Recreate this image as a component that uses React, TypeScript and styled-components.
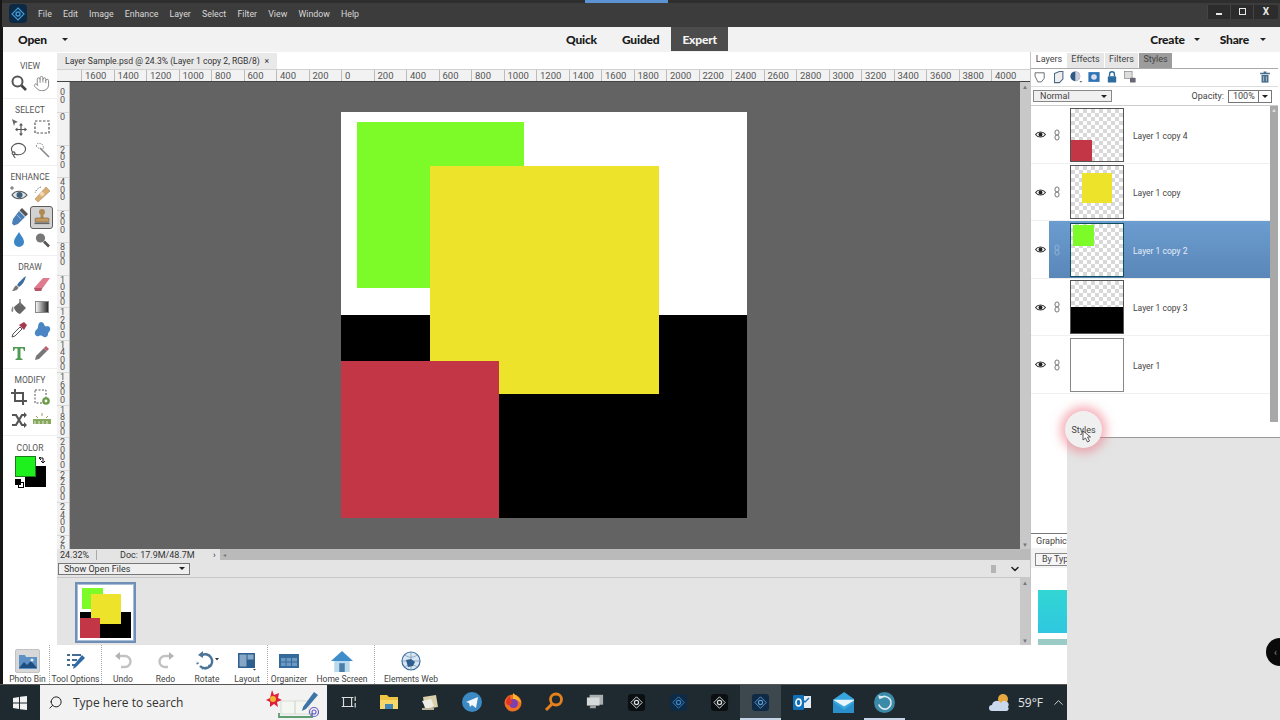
import React from 'react'
import styled, { createGlobalStyle } from 'styled-components'
import { ChevronDown, ChevronUp, Search, Hand, Lasso } from 'lucide-react'

const GlobalStyle = createGlobalStyle`
  html, body { margin: 0; padding: 0; background: #e4e4e4; }
  * { box-sizing: border-box; }
  body { font-family: Roboto, "Liberation Sans", sans-serif; }
`

const Page = styled.div`
  position: relative;
  display: grid;
  width: 1280px;
  height: 720px;
  overflow: hidden;
  background: #e4e4e4;
  grid-template-columns: 1030px 37px 213px;
  grid-template-rows: 27px 25px 386px 207px 39px 36px;
`

/* ---- title + mode bars ---- */
const TitleBar = styled.div`
  grid-column: 1 / -1;
  position: relative;
  display: flex;
  align-items: center;
  padding: 0 2px 0 9px;
  background: linear-gradient(#2e2e2e 0, #2e2e2e 3px, #3c3c3c 3px);
  border-left: 2px solid #161616;
`
const ProgressStrip = styled.div`
  position: absolute;
  left: 583px;
  top: 0;
  width: 83px;
  height: 3px;
  background: #5b93d3;
`
const Logo = styled.div`
  display: flex;
  width: 18px;
  height: 19px;
  margin-left: -2px;
  align-items: center;
  justify-content: center;
  border-radius: 4px;
  background: #0c2a45;
`
const Menu = styled.div`
  display: flex;
  gap: 11.2px;
  margin-left: 11px;
  color: #d8d8d8;
  font-size: 8.8px;
`
const WindowControls = styled.div`
  display: flex;
  margin-left: auto;
  margin-top: -4px;
  height: 14px;
  border-radius: 2px;
  background: #2c2c2c;
  color: #e8e8e8;
`
const WindowButton = styled.div<{ $w: number }>`
  display: flex;
  width: ${(p) => p.$w}px;
  align-items: center;
  justify-content: center;
  font-size: 10px;
  font-weight: 700;
  border-left: 1px solid #454545;
`
const MinGlyph = styled.span`
  width: 6px;
  height: 2px;
  margin-top: 5px;
  background: #e8e8e8;
`
const MaxGlyph = styled.span`
  width: 7px;
  height: 7px;
  border: 1.5px solid #e8e8e8;
`
const ModeBar = styled.div`
  grid-column: 1 / -1;
  position: relative;
  display: flex;
  align-items: center;
  padding-left: 15px;
  background: #f2f2f2;
  border-left: 3px solid #161616;
  font-family: Lato, "Open Sans", sans-serif;
  font-size: 12px;
  font-weight: 900;
  letter-spacing: -0.2px;
  color: #1a1a1a;
`
const Caret = styled.span<{ $ml: number }>`
  width: 0;
  height: 0;
  margin-left: ${(p) => p.$ml}px;
  border-left: 3px solid transparent;
  border-right: 3px solid transparent;
  border-top: 3px solid #222;
`
const ModeLink = styled.div<{ $ml: number; $active?: boolean }>`
  display: flex;
  height: 24px;
  margin-left: ${(p) => p.$ml}px;
  padding: 0 ${(p) => (p.$active ? 11 : 0)}px;
  align-items: center;
  color: ${(p) => (p.$active ? '#f4f4f4' : '#1a1a1a')};
  background: ${(p) => (p.$active ? '#4c4c4c' : 'transparent')};
`
const ModeCenter = styled.div`
  position: absolute;
  left: 563px;
  top: 0;
  display: flex;
  align-items: center;
`
const ModeRight = styled.div`
  margin-left: auto;
  margin-right: 14px;
  display: flex;
  align-items: center;
`

/* ---- workspace ---- */
const Workspace = styled.div`
  grid-column: 1;
  grid-row: 3 / 5;
  display: flex;
  min-height: 0;
  border-left: 3px solid #161616;
`
const ToolColumn = styled.div`
  width: 54px;
  flex: none;
  padding-top: 2px;
  background: #fff;
`
const ToolSection = styled.div<{ $last?: boolean }>`
  padding: ${(p) => (p.$last ? 7 : 6)}px 0 ${(p) => (p.$last ? 0 : 3.5)}px;
  border-bottom: ${(p) => (p.$last ? 'none' : '1px solid #f0f0f0')};
  margin-bottom: -1px;
`
const ToolLabel = styled.div`
  height: 13px;
  line-height: 12px;
  text-align: center;
  font-size: 8.5px;
  color: #555;
`
const ToolGrid = styled.div`
  display: grid;
  margin-top: -1.5px;
  grid-template-columns: 23px 23px;
  grid-auto-rows: 23px;
  justify-content: center;
`
const ToolButton = styled.div<{ $active?: boolean }>`
  display: flex;
  align-items: center;
  justify-content: center;
  border-radius: 3px;
  background: ${(p) => (p.$active ? '#d2d2d2' : 'transparent')};
  border: ${(p) => (p.$active ? '1px solid #5c5c5c' : 'none')};
`
const ColorWell = styled.div`
  position: relative;
  width: 32px;
  height: 32px;
  margin: 1px 0 0 12px;
`
const Swatch = styled.div<{ $x: number; $y: number; $w: number; $c: string; $b?: string }>`
  position: absolute;
  left: ${(p) => p.$x}px;
  top: ${(p) => p.$y}px;
  width: ${(p) => p.$w}px;
  height: ${(p) => p.$w}px;
  background: ${(p) => p.$c};
  border: ${(p) => (p.$b ? `1px solid ${p.$b}` : 'none')};
`
const SwapArrows = styled.svg`
  position: absolute;
  left: 23px;
  top: 1px;
`
const EditorArea = styled.div`
  flex: 1;
  min-width: 0;
  display: flex;
  flex-direction: column;
  background: #e4e4e4;
`
const TabStrip = styled.div`
  height: 18px;
  padding-top: 1px;
  background: #fff;
  border-bottom: 1px solid #d0d0d0;
`
const DocTab = styled.div`
  display: flex;
  width: 220px;
  height: 16px;
  padding: 0 8px 0 8px;
  align-items: center;
  justify-content: space-between;
  background: #e9e9e9;
  font-size: 8.6px;
  color: #333;
  white-space: nowrap;
`
const HRuler = styled.div`
  display: flex;
  height: 12px;
  flex: none;
  overflow: hidden;
  padding-left: 24px;
  background: #f2f2f2;
  border-bottom: 1px solid #444;
`
const HRulerCell = styled.div`
  width: 32.5px;
  flex: none;
  padding-left: 3px;
  border-left: 1px solid #bbb;
  font-size: 9.5px;
  line-height: 11px;
  color: #555;
`
const CanvasRow = styled.div`
  display: flex;
  height: 467px;
  flex: none;
`
const VRuler = styled.div`
  width: 13px;
  flex: none;
  overflow: hidden;
  background: #f2f2f2;
  border-right: 1px solid #bbb;
`
const VRulerCell = styled.div`
  height: 32.5px;
  padding: 1px 0 0 3px;
  border-top: 1px solid #d8d8d8;
  white-space: pre-line;
  font-size: 9px;
  line-height: 7.5px;
  color: #555;
  &:first-child {
    margin-top: -2.5px;
  }
`
const Canvas = styled.div`
  flex: 1;
  display: flex;
  align-items: center;
  justify-content: center;
  padding: 0 2px 2px 0;
  background: #636363;
`
const Document = styled.div`
  position: relative;
  width: 406px;
  height: 406px;
  background: linear-gradient(#fff 0, #fff 50%, #000 50%);
`
const Shape = styled.div<{ $x: number; $y: number; $w: number; $h: number; $c: string }>`
  position: absolute;
  left: ${(p) => p.$x}px;
  top: ${(p) => p.$y}px;
  width: ${(p) => p.$w}px;
  height: ${(p) => p.$h}px;
  background: ${(p) => p.$c};
`
const VScroll = styled.div`
  display: flex;
  width: 10px;
  flex: none;
  flex-direction: column;
  justify-content: space-between;
  align-items: center;
  background: #c8c8c8;
  color: #777;
  font-size: 6px;
  line-height: 9px;
`
const StatusBar = styled.div`
  display: flex;
  height: 11px;
  flex: none;
  align-items: center;
  font-size: 9px;
  color: #333;
`
const ZoomField = styled.div`
  width: 40px;
  padding-left: 3px;
  border-right: 1px solid #aaa;
`
const DocInfo = styled.div`
  width: 116px;
  padding-left: 23px;
`
const HScrollTrack = styled.div`
  flex: 1;
  height: 100%;
  margin-left: 4px;
  padding-left: 3px;
  line-height: 11px;
  background: #bababa;
  color: #777;
  font-size: 6px;
`
const BinHeader = styled.div`
  display: flex;
  height: 18px;
  flex: none;
  align-items: center;
  padding: 0 9px 0 1px;
  border-bottom: 1px solid #c8c8c8;
`
const BinSelect = styled.div`
  display: flex;
  width: 132px;
  height: 12px;
  align-items: center;
  justify-content: space-between;
  padding: 0 4px 0 5px;
  background: #efefef;
  border: 1px solid #777;
  font-size: 9px;
  color: #333;
`
const BinGrip = styled.div`
  width: 5px;
  height: 8px;
  margin-left: auto;
  margin-right: 13px;
  background: #b5b5b5;
`
const BinBody = styled.div`
  flex: 1;
  min-height: 0;
  display: flex;
  padding-left: 18px;
`
const BinThumb = styled.div`
  position: relative;
  width: 61px;
  height: 61px;
  margin-top: 4px;
  border: 2px solid #6f8fb6;
  outline: 1px solid #a9bdd6;
  outline-offset: -3px;
  background: #fff;
`
const MiniDoc = styled.div`
  position: absolute;
  left: 3px;
  top: 3px;
  width: 51px;
  height: 51px;
  background: linear-gradient(#fff 0, #fff 50%, #000 50%);
`
const BinSpacer = styled.div`
  flex: 1;
`

/* ---- layers panel ---- */
const LayersPanel = styled.div`
  grid-column: 2 / 4;
  grid-row: 3;
  position: relative;
  display: flex;
  flex-direction: column;
  padding-right: 2px;
  background: #fff;
  border-left: 1px solid #c4c4c4;
  &::after {
    content: '';
    position: absolute;
    left: 36px;
    right: 0;
    bottom: 0;
    height: 1px;
    background: #999;
  }
`
const PanelTabs = styled.div`
  display: flex;
  height: 17px;
  flex: none;
  padding: 1px 0 0 1px;
  gap: 1px;
  border-bottom: 1px solid #aaa;
`
const PanelTab = styled.div<{ $w: number; $bg: string }>`
  width: ${(p) => p.$w}px;
  text-align: center;
  line-height: 13px;
  font-size: 9px;
  color: #444;
  background: ${(p) => p.$bg};
`
const PanelTools = styled.div`
  display: flex;
  height: 18px;
  flex: none;
  align-items: center;
  gap: 4px;
  padding: 0 6px 1px 2px;
  border-bottom: 1px solid #ddd;
`
const TrashSlot = styled.div`
  margin-left: auto;
  display: flex;
`
const BlendRow = styled.div`
  display: flex;
  height: 19px;
  flex: none;
  align-items: center;
  padding: 0 6px 0 2px;
  border-bottom: 1px solid #ccc;
  font-size: 9px;
  color: #444;
`
const BlendSelect = styled.div`
  display: flex;
  width: 79px;
  height: 12px;
  align-items: center;
  justify-content: space-between;
  padding: 0 4px 0 6px;
  background: #f0f0f0;
  border: 1px solid #888;
`
const OpacityLabel = styled.div`
  margin-left: auto;
  margin-right: 4px;
`
const OpacitySelect = styled.div`
  display: flex;
  width: 44px;
  height: 13px;
  align-items: center;
  padding-left: 4px;
  background: #fff;
  border: 1px solid #777;
`
const OpacityCaret = styled.div`
  display: flex;
  width: 13px;
  height: 100%;
  margin-left: auto;
  align-items: center;
  justify-content: center;
  border-left: 1px solid #777;
`
const ListRow = styled.div`
  flex: 1;
  min-height: 0;
  display: flex;
`
const LayerList = styled.div`
  flex: 1;
  padding-top: 0.25px;
`
const LayerScroll = styled.div`
  display: flex;
  width: 8px;
  flex: none;
  margin-bottom: 16px;
  justify-content: center;
  background: #a8a8a8;
  color: #ddd;
  font-size: 6px;
`
const LayerRow = styled.div`
  display: flex;
  height: 57.5px;
  align-items: center;
  border-bottom: 1px solid #f0f0f0;
`
const EyeSlot = styled.div`
  display: flex;
  width: 18px;
  flex: none;
  justify-content: center;
`
const RowBody = styled.div<{ $selected?: boolean }>`
  display: flex;
  flex: 1;
  height: 100%;
  align-items: center;
  color: ${(p) => (p.$selected ? '#e4eefa' : '#444')};
  background: ${(p) => (p.$selected ? 'linear-gradient(#6c9dd0, #5a86b8)' : 'transparent')};
`
const LinkSlot = styled.div`
  display: flex;
  width: 21px;
  flex: none;
  padding-left: 5px;
`
const LayerThumb = styled.div<{ $plain?: boolean; $selected?: boolean }>`
  position: relative;
  width: 54px;
  height: 54px;
  flex: none;
  border: 1px solid ${(p) => (p.$selected ? '#0d4f5c' : p.$plain ? '#888' : '#555')};
  background-color: #fff;
  background-image: ${(p) =>
    p.$plain ? 'none' : 'conic-gradient(#d8d8d8 25%, #fff 25% 50%, #d8d8d8 50% 75%, #fff 75%)'};
  background-size: 8px 8px;
`
const LayerName = styled.div`
  margin-left: 9px;
  padding-top: 2px;
  font-size: 8.5px;
`
const PressBadge = styled.div`
  position: absolute;
  left: 34px;
  top: 359px;
  display: flex;
  width: 37px;
  height: 37px;
  padding-top: 1px;
  align-items: center;
  justify-content: center;
  border-radius: 50%;
  background: #f0f0f0;
  box-shadow: 0 0 10px 5px rgba(240, 110, 125, 0.5);
  font-size: 9px;
  color: #444;
  z-index: 2;
`
const Pointer = styled.svg`
  position: absolute;
  left: 17px;
  top: 19px;
`

/* ---- graphics stub ---- */
const GraphicsStub = styled.div`
  grid-column: 2;
  grid-row: 4;
  display: flex;
  flex-direction: column;
  overflow: hidden;
  padding-top: 95px;
  background: #fff;
  border-left: 1px solid #c4c4c4;
`
const GraphicsTab = styled.div`
  height: 15px;
  padding-left: 5px;
  border-top: 1px solid #777;
  font-size: 9px;
  line-height: 14px;
  color: #444;
  white-space: nowrap;
  background: #fff;
`
const GraphicsFilter = styled.div`
  height: 22px;
  padding: 5px 0 0 4px;
  background: #f4f4f4;
`
const FilterButton = styled.div`
  width: 40px;
  height: 13px;
  padding-left: 6px;
  border: 1px solid #888;
  background: #f6f6f6;
  font-size: 9px;
  line-height: 11px;
  color: #444;
  white-space: nowrap;
`
const GraphicThumb = styled.div<{ $h: number; $mt: number; $bg: string }>`
  flex: none;
  height: ${(p) => p.$h}px;
  margin: ${(p) => p.$mt}px 0 0 7px;
  background: ${(p) => p.$bg};
`

/* ---- bottom + taskbar ---- */
const BottomBar = styled.div`
  grid-column: 1 / 3;
  grid-row: 5;
  display: flex;
  padding-left: 3px;
  background: #fff;
  border-left: 3px solid #161616;
`
const BottomItem = styled.div<{ $w: number; $sep?: boolean }>`
  display: flex;
  width: ${(p) => p.$w}px;
  flex: none;
  flex-direction: column;
  align-items: center;
  padding-top: 4px;
  border-right: ${(p) => (p.$sep ? '1px dotted #aaa' : 'none')};
`
const BottomIcon = styled.div<{ $active?: boolean }>`
  display: flex;
  width: 25px;
  height: 24px;
  flex: none;
  align-items: center;
  justify-content: center;
  border-radius: 2px;
  background: ${(p) => (p.$active ? '#d8d8d8' : 'transparent')};
  border: ${(p) => (p.$active ? '1px solid #c2c2c2' : 'none')};
`
const BottomLabel = styled.div`
  margin-top: 1px;
  font-size: 8.5px;
  line-height: 11px;
  color: #444;
  white-space: nowrap;
`
const Taskbar = styled.div`
  grid-column: 1 / 3;
  grid-row: 6;
  display: flex;
  align-items: center;
  height: 36px;
  background: #1f2a30;
  border-top: 1px solid #555;
`
const StartSlot = styled.div`
  display: flex;
  width: 40px;
  flex: none;
  justify-content: center;
`
const SearchBox = styled.div`
  display: flex;
  width: 287px;
  height: 35px;
  flex: none;
  align-items: center;
  padding-left: 8px;
  background: #f2f2f2;
  color: #333;
  font-family: "Open Sans", sans-serif;
  font-size: 12px;
`
const SearchText = styled.span`
  margin-left: 10px;
`
const MirroredSearch = styled(Search)`
  transform: scaleX(-1);
`
const DoodleSlot = styled.div`
  margin-left: auto;
  margin-right: 6px;
  display: flex;
`
const TaskItem = styled.div<{ $active?: boolean; $open?: boolean }>`
  display: flex;
  width: 41.3px;
  height: 35px;
  flex: none;
  align-items: center;
  justify-content: center;
  background: ${(p) => (p.$active ? '#3d484e' : 'transparent')};
  border-bottom: 2px solid ${(p) => (p.$active || p.$open ? '#c6d4e8' : 'transparent')};
  padding-top: 1px;
`
const Weather = styled.div`
  display: flex;
  margin-left: auto;
  align-items: center;
  color: #e6e6e6;
  font-family: "Open Sans", sans-serif;
  font-size: 12px;
  gap: 7px;
`
const TrayChevron = styled.div`
  display: flex;
  width: 16px;
  margin-left: 8px;
  color: #e6e6e6;
`
const SidePill = styled.div`
  position: absolute;
  left: 1266px;
  top: 638px;
  display: flex;
  width: 28px;
  height: 28px;
  padding-left: 8px;
  align-items: center;
  border-radius: 50%;
  background: #0a0a0a;
  color: #888;
  font-size: 10px;
`

/* ---- icons ---- */
const Ico = ({ s = 20, children }: { s?: number; children: React.ReactNode }) => (
  <svg width={s} height={s} viewBox="0 0 20 20" fill="none">
    {children}
  </svg>
)

const ZoomTool = () => (
  <Ico>
    <circle cx="8.5" cy="8.5" r="5" stroke="#555" strokeWidth="2" />
    <path d="M12.5 12.5l4.5 4.5" stroke="#444" strokeWidth="2.6" />
  </Ico>
)
const MoveTool = () => (
  <Ico>
    <path d="M3 2l6 3-3 1-1 3z" fill="#666" />
    <path d="M12 8v9M8 12.500h9" stroke="#555" strokeWidth="1.200" />
    <path d="M12 6l-2 2.500h4zM12 19l-2-2.500h4zM6 12.500l2.500-2v4zM18 12.500l-2.500-2v4z" fill="#555" />
  </Ico>
)
const MarqueeTool = () => (
  <Ico>
    <rect x="3" y="4" width="14" height="12" stroke="#555" strokeWidth="1.2" strokeDasharray="2.5 1.5" />
  </Ico>
)
const WandTool = () => (
  <Ico>
    <path d="M8 8l9 9" stroke="#888" strokeWidth="1.6" />
    <path d="M4 6l2-3 4 1 2 4-2 1-4-1z" stroke="#888" strokeWidth="0.9" strokeDasharray="1.5 1" />
  </Ico>
)
const EyeTool = () => (
  <Ico>
    <path d="M3 2v4M1 4h4" stroke="#666" strokeWidth="1" />
    <path d="M3 11c3-5 11-5 15 0-4 5-12 5-15 0z" stroke="#555" strokeWidth="1.2" fill="#dde4ea" />
    <circle cx="10.5" cy="11" r="3" fill="#3f5f78" />
  </Ico>
)
const BandTool = () => (
  <Ico>
    <path d="M3 15L14 3l4 4L6 18z" fill="#d9ae72" stroke="#9b7a4c" strokeWidth="0.5" />
    <path d="M9 3c-3 1-5 3-6 6" stroke="#777" strokeWidth="1" strokeDasharray="1.5 1.2" />
    <rect x="8" y="8" width="4" height="4" transform="rotate(-45 10 10)" fill="#f0d9b2" />
  </Ico>
)
const SmartBrushTool = () => (
  <Ico>
    <path d="M13 1l6 6-2.500 2.500-6-6z" fill="#555" />
    <path d="M10 4l6 6-7 7-4 1.500-2-2L4 12z" fill="#4a7fb8" />
    <path d="M8 8l4 4" stroke="#8fb5db" strokeWidth="1" />
  </Ico>
)
const StampTool = () => (
  <Ico>
    <circle cx="10" cy="5" r="3" fill="#b08a56" />
    <rect x="8.5" y="7" width="3" height="5" fill="#b08a56" />
    <rect x="3" y="11" width="14" height="4" rx="1" fill="#c49a63" stroke="#7a5d36" strokeWidth="0.6" />
    <rect x="2.5" y="15.5" width="15" height="1.6" fill="#666" />
  </Ico>
)
const DropTool = () => (
  <Ico>
    <path d="M10 2c3 5 5 7 5 10a5 5 0 01-10 0c0-3 2-5 5-10z" fill="#3c86c6" />
  </Ico>
)
const SpongeTool = () => (
  <Ico>
    <circle cx="8.5" cy="8" r="4.6" fill="#777" />
    <path d="M12 11.5l5 5" stroke="#555" strokeWidth="2.6" />
  </Ico>
)
const BrushTool = () => (
  <Ico>
    <path d="M17 2c-3 2-7 6-9 9l2 2c3-2 6-6 7-11z" fill="#3b6e9c" />
    <path d="M3 17c3 0 6-1 6.5-3.5L7.5 11.5C5 12 5 15 3 17z" fill="#777" />
  </Ico>
)
const EraserTool = () => (
  <Ico>
    <path d="M2 14L11 4h7l-8 11H3z" fill="#e07b8e" />
    <path d="M2 14h8l-.6 3H3z" fill="#b9566c" />
  </Ico>
)
const BucketTool = () => (
  <Ico>
    <path d="M5 10l6-5 6 6-6 6c-2 0-6-4-6-7z" fill="#666" />
    <path d="M11 2v7" stroke="#777" strokeWidth="1.4" />
    <path d="M4 9c-2 3-2 5-1 6s2-3 1-6z" fill="#8a8a8a" />
  </Ico>
)
const GradientTool = () => (
  <svg width="20" height="20" viewBox="0 0 20 20">
    <defs>
      <linearGradient id="gradtool">
        <stop offset="0" stopColor="#fff" />
        <stop offset="1" stopColor="#222" />
      </linearGradient>
    </defs>
    <rect x="3.5" y="4.5" width="13" height="11" fill="url(#gradtool)" stroke="#888" />
  </svg>
)
const DropperTool = () => (
  <Ico>
    <path d="M3 17l1-3 7-7 2 2-7 7z" fill="#fff" stroke="#555" strokeWidth="1" />
    <path d="M10 5l5-3 3 3-3 5z" fill="#a5394d" />
  </Ico>
)
const ShapeTool = () => (
  <Ico>
    <path d="M9 2c3 0 3 3 4 4s4-1 5 2-2 4-2 6-2 4-4 3-3-2-5-1-5-1-4-4 3-3 3-5 1-5 3-5z" fill="#4a86c4" />
  </Ico>
)
const TextTool = () => (
  <Ico>
    <path d="M4 4h12v4h-1l-1-2.500h-2.500V15l2 1v1H6.500v-1l2-1V5.500H6L5 8H4z" fill="#4f9a55" />
  </Ico>
)
const PencilTool = () => (
  <Ico>
    <path d="M3 17l1-4 8-8 3 3-8 8z" fill="#777" />
    <path d="M12 5l2-2 3 3-2 2z" fill="#c05a6e" />
  </Ico>
)
const CropTool = () => (
  <Ico>
    <path d="M6 2v12h12M2 6h12v12" stroke="#555" strokeWidth="2" />
  </Ico>
)
const RecomposeTool = () => (
  <Ico>
    <rect x="3" y="3" width="11" height="13" stroke="#555" strokeWidth="1" strokeDasharray="2 1.500" />
    <circle cx="14" cy="14" r="3.800" fill="#6b9a46" />
    <circle cx="14" cy="14" r="1.400" fill="#fff" />
  </Ico>
)
const ContentMoveTool = () => (
  <Ico>
    <path d="M3 5l4 0 6 10 4 0M3 15l4 0 6-10 4 0" stroke="#555" strokeWidth="2.200" />
    <path d="M15 2l3 3-3 3zM15 12l3 3-3 3z" fill="#555" />
  </Ico>
)
const StraightenTool = () => (
  <Ico>
    <rect x="1" y="9" width="18" height="5" fill="#86a85c" />
    <path d="M3 11v3M7 11v3M11 11v3M15 11v3" stroke="#fff" strokeWidth="0.8" />
    <path d="M10 3v3M4 6l2 2M16 6l-2 2" stroke="#a08c4a" strokeWidth="0.9" />
  </Ico>
)

const PanelIcons = [
  <Ico s={14} key="a"><path d="M3 4h13v8l-4 5H7l-4-8z" fill="#fff" stroke="#555" strokeWidth="1.200" /></Ico>,
  <Ico s={14} key="b"><path d="M5 5l7-3h5v11l-5 5H5z" fill="#eee" stroke="#4a6a86" strokeWidth="1.500" /></Ico>,
  <Ico s={14} key="c"><circle cx="9" cy="9" r="7" fill="#2f5a86" /><path d="M9 2a7 7 0 010 14z" fill="#ccd" /><path d="M15 16h4l-2 2z" fill="#333" /></Ico>,
  <Ico s={14} key="d"><rect x="2" y="3" width="16" height="14" fill="#2f75b5" /><circle cx="10" cy="10" r="4" fill="#dde" /></Ico>,
  <Ico s={14} key="e"><rect x="4" y="9" width="12" height="9" rx="1" fill="#2e6c9f" /><path d="M6.500 9V6a3.500 3.500 0 017 0v3" stroke="#2e6c9f" strokeWidth="2" /></Ico>,
  <Ico s={14} key="f"><rect x="2" y="2" width="11" height="10" fill="#ddd" stroke="#888" /><rect x="10" y="11" width="8" height="7" rx="1" fill="#667" /></Ico>,
]
const TrashIcon = () => (
  <Ico s={14}>
    <path d="M3 4h14v2H3zM8 2h4v2H8z" fill="#4a6f8c" />
    <path d="M5 7h10v11H5z" fill="#4a6f8c" />
    <path d="M8 9v7M12 9v7" stroke="#cfdbe4" />
  </Ico>
)
const EyeIcon = () => (
  <Ico s={11}>
    <path d="M1 10c4-6 14-6 18 0-4 6-14 6-18 0z" fill="#fff" stroke="#333" strokeWidth="2" />
    <circle cx="10" cy="10" r="3.600" fill="#222" />
  </Ico>
)
const LinkIcon = ({ light }: { light?: boolean }) => (
  <svg width="6" height="12" viewBox="0 0 6 12" fill="none" stroke={light ? '#8fb2d6' : '#777'} strokeWidth="1">
    <rect x="1" y="1" width="4" height="5" rx="2" />
    <rect x="1" y="6" width="4" height="5" rx="2" />
  </svg>
)

const BottomIcons = {
  bin: (
    <Ico s={20}>
      <path d="M1 4h6l1 2h11v12H1z" fill="#5d90c4" />
      <path d="M1 17l5-6 3 3 4-4 6 7z" fill="#1f4f80" />
      <circle cx="14" cy="9" r="1.600" fill="#dfeaf5" />
    </Ico>
  ),
  options: (
    <Ico s={20}>
      <path d="M1 3h3v2H1zM1 8h3v2H1zM1 13h3v2H1zM6 3h9v2H6zM6 8h5v2H6zM6 13h3v2H6z" fill="#456c94" />
      <path d="M7 18l1-4 8-10 3 3-9 9z" fill="#2f6aa6" />
    </Ico>
  ),
  undo: (
    <Ico s={20}>
      <path d="M6 5h6a5 5 0 010 11H8" stroke="#c2c2c2" strokeWidth="2.400" />
      <path d="M7 1v8L2 5z" fill="#b4b4b4" />
    </Ico>
  ),
  redo: (
    <Ico s={20}>
      <path d="M14 5H9a5 5 0 000 11h3" stroke="#c2c2c2" strokeWidth="2.400" />
      <path d="M13 1v8l5-4z" fill="#b4b4b4" />
    </Ico>
  ),
  rotate: (
    <svg width="24" height="20" viewBox="0 0 24 20" fill="none">
      <path d="M7 4a7 7 0 11-2 11" stroke="#4a7398" strokeWidth="2.400" />
      <path d="M3 13a7 7 0 01-1-3" stroke="#4a7398" strokeWidth="2.400" strokeDasharray="1.500 1.500" />
      <path d="M8 0v7L3 4z" fill="#4a7398" />
      <path d="M15 14a7 7 0 01-8 3" stroke="#4a7398" strokeWidth="2.400" strokeDasharray="2 2" />
      <path d="M20 7h4l-2 2.500z" fill="#333" />
    </svg>
  ),
  layout: (
    <Ico s={20}>
      <rect x="1" y="2" width="17" height="15" fill="#2d5f8f" />
      <rect x="2.500" y="3.500" width="7" height="12" fill="#86a8c6" />
      <rect x="10.500" y="3.500" width="6" height="5" fill="#86a8c6" />
      <path d="M16 18h3l-1.500 1.500z" fill="#333" />
    </Ico>
  ),
  organizer: (
    <Ico s={20}>
      <rect x="0" y="3" width="20" height="14" fill="#34699c" />
      <path d="M2 7h16v8H2z" fill="#6d9ac2" />
      <path d="M7 7v8M12.500 7v8M2 11h16" stroke="#34699c" />
    </Ico>
  ),
  home: (
    <Ico s={22}>
      <path d="M10 1L0 10h20z" fill="#3f8ccb" />
      <path d="M3 10h14v10H3z" fill="#b9d9ee" />
      <path d="M7.500 12h5v8h-5z" fill="#4b7ea6" />
    </Ico>
  ),
  web: (
    <Ico s={20}>
      <circle cx="10" cy="10" r="9" fill="#d9e6f1" stroke="#3c6e9c" strokeWidth="1.200" />
      <path d="M1 10h18M10 1v18M4 4c4 3 8 3 12 0M4 16c4-3 8-3 12 0" stroke="#6a94b8" strokeWidth="0.700" />
      <path d="M5 9l5-1 4 3-2 4-5 1z" fill="#2f5f8e" />
    </Ico>
  ),
}

const PsIcon = ({ bg = '#0b0f12', ring = '#d8dde0' }: { bg?: string; ring?: string }) => (
  <Ico s={19}>
    <rect x="1" y="1" width="18" height="18" rx="3.500" fill={bg} />
    <path d="M10 4l6 6-6 6-6-6z" stroke={ring} strokeWidth="1" />
    <circle cx="10" cy="10" r="2.200" stroke={ring} strokeWidth="1.300" />
  </Ico>
)

const TaskIcons: React.ReactNode[] = [
  <Ico s={18} key="view"><path d="M3 5h13M3 15h13M5 5v10M14 5v10M18 4v5M18 11v5" stroke="#dcdcdc" strokeWidth="1.300" /></Ico>,
  <Ico s={20} key="folder"><path d="M1 3h7l2 2h9v12H1z" fill="#eec543" /><path d="M1 8h18v9H1z" fill="#f5d76a" /><path d="M6 12h8v5H6z" fill="#3f87b6" /></Ico>,
  <Ico s={20} key="notes"><path d="M3 5l13-2 2 12-13 2z" fill="#d9cfa8" /><path d="M2 9l9-2 3 7-8 3z" fill="#edeee6" /><path d="M2 16h12v2H2z" fill="#b9b39b" /></Ico>,
  <Ico s={20} key="tg"><circle cx="10" cy="10" r="10" fill="#3b8ac4" /><path d="M4 10l12-5-2 11-4-3-2 2-1-4z" fill="#f4f8fb" /></Ico>,
  <Ico s={20} key="ff"><circle cx="10" cy="11" r="8.500" fill="#f0701f" /><path d="M10 1c3 3 7 4 8 10-3-3-6-4-8-4z" fill="#ffb52d" /><circle cx="10.500" cy="11.500" r="4.500" fill="#7b3fb0" /><path d="M3 11c0-4 2-6 4-7 0 3 1 5 3 6-2 1-4 6-7 1z" fill="#e6332a" /></Ico>,
  <Ico s={20} key="mag"><circle cx="12" cy="7.500" r="5.500" stroke="#e4811c" strokeWidth="2.800" /><path d="M8 12l-6 6" stroke="#e4811c" strokeWidth="3" /></Ico>,
  <Ico s={18} key="mon"><rect x="4" y="2" width="15" height="11" fill="#a9aeb0" /><rect x="1" y="5" width="14" height="9" fill="#d6d9da" /><path d="M5 14h6v3H4z" fill="#a0a4a6" /></Ico>,
  <PsIcon key="ps1" />,
  <PsIcon key="ps2" bg="#0e2a44" ring="#3a86c6" />,
  <PsIcon key="ps3" />,
  <PsIcon key="ps4" bg="#0e2a44" ring="#5a9ad2" />,
  <Ico s={20} key="ol"><rect x="8" y="4" width="11" height="12" fill="#e6eef5" /><path d="M11 8l2 2 4-4" stroke="#1a6fb5" strokeWidth="1.400" /><rect x="1" y="3" width="11" height="15" rx="1" fill="#1270b8" /><ellipse cx="6.500" cy="10.500" rx="2.600" ry="3.400" stroke="#fff" strokeWidth="1.500" /></Ico>,
  <Ico s={22} key="mail"><path d="M1 8l10-7 10 7v12H1z" fill="#37a5de" /><path d="M1 8h20L11 14z" fill="#e8f5fc" /><path d="M1 20V10l10 7 10-7v10z" fill="#2a8fcb" /></Ico>,
  <Ico s={21} key="ref"><circle cx="10" cy="10" r="10" fill="#3a8aa8" /><path d="M6 6a6 6 0 11-1.500 6" stroke="#dcecf2" strokeWidth="1.600" /><path d="M4 3l4 1-3 3z" fill="#dcecf2" /></Ico>,
]

const WeatherIcon = () => (
  <svg width="22" height="19" viewBox="0 0 22 19">
    <circle cx="14" cy="6" r="5" fill="#e7a83f" />
    <path d="M3 18a3 3 0 010-6 5 5 0 019-2 4 4 0 017 4 2.500 2.500 0 01-1 4z" fill="#c9d8ec" />
  </svg>
)

const toolSections: { title: string; tools: React.ReactNode[]; active?: number }[] = [
  { title: 'VIEW', tools: [<ZoomTool key="z" />, <Hand key="h" size={17} color="#888" strokeWidth={1.4} />] },
  { title: 'SELECT', tools: [<MoveTool key="m" />, <MarqueeTool key="q" />, <Lasso key="l" size={17} color="#555" strokeWidth={1.6} />, <WandTool key="w" />] },
  { title: 'ENHANCE', active: 3, tools: [<EyeTool key="e" />, <BandTool key="b" />, <SmartBrushTool key="s" />, <StampTool key="t" />, <DropTool key="d" />, <SpongeTool key="p" />] },
  { title: 'DRAW', tools: [<BrushTool key="b" />, <EraserTool key="r" />, <BucketTool key="u" />, <GradientTool key="g" />, <DropperTool key="i" />, <ShapeTool key="c" />, <TextTool key="t" />, <PencilTool key="n" />] },
  { title: 'MODIFY', tools: [<CropTool key="c" />, <RecomposeTool key="r" />, <ContentMoveTool key="v" />, <StraightenTool key="s" />] },
]

const menuItems = ['File', 'Edit', 'Image', 'Enhance', 'Layer', 'Select', 'Filter', 'View', 'Window', 'Help']

const rulerTop = [1600, 1400, 1200, 1000, 800, 600, 400, 200, 0, 200, 400, 600, 800, 1000, 1200, 1400, 1600, 1800, 2000, 2200, 2400, 2600, 2800, 3000, 3200, 3400, 3600, 3800, 4000]
const rulerSide = ['\n0\n0', '0', '2\n0\n0', '4\n0\n0', '6\n0\n0', '8\n0\n0', '1\n0\n0\n0', '1\n2\n0\n0', '1\n4\n0\n0', '1\n6\n0\n0', '1\n8\n0\n0', '2\n0\n0\n0', '2\n2\n0\n0', '2\n4\n0\n0', '2\n6']

type ShapeSpec = { x: number; y: number; w: number; h: number; c: string }
const layers: { name: string; selected?: boolean; plain?: boolean; shapes: ShapeSpec[] }[] = [
  { name: 'Layer 1 copy 4', shapes: [{ x: 0, y: 31, w: 21, h: 21, c: '#c23646' }] },
  { name: 'Layer 1 copy', shapes: [{ x: 11, y: 7, w: 30, h: 30, c: '#ece32a' }] },
  { name: 'Layer 1 copy 2', selected: true, shapes: [{ x: 2, y: 1, w: 21, h: 21, c: '#7dfb28' }] },
  { name: 'Layer 1 copy 3', shapes: [{ x: 0, y: 26, w: 52, h: 26, c: '#000' }] },
  { name: 'Layer 1', plain: true, shapes: [] },
]

const bottomItems: { label: string; w: number; icon: React.ReactNode; sep?: boolean; active?: boolean }[] = [
  { label: 'Photo Bin', w: 44, icon: BottomIcons.bin, sep: true, active: true },
  { label: 'Tool Options', w: 52, icon: BottomIcons.options, sep: true },
  { label: 'Undo', w: 42, icon: BottomIcons.undo },
  { label: 'Redo', w: 43, icon: BottomIcons.redo },
  { label: 'Rotate', w: 40, icon: BottomIcons.rotate },
  { label: 'Layout', w: 41, icon: BottomIcons.layout, sep: true },
  { label: 'Organizer', w: 42, icon: BottomIcons.organizer },
  { label: 'Home Screen', w: 65, icon: BottomIcons.home, sep: true },
  { label: 'Elements Web', w: 72, icon: BottomIcons.web },
]

const App = () => (
  <Page>
    <GlobalStyle />
    <TitleBar>
      <ProgressStrip />
      <Logo>
        <svg width="14" height="14" viewBox="0 0 14 14" fill="none" stroke="#3f9ad6">
          <path d="M7 1l6 6-6 6-6-6z" strokeWidth="1.200" />
          <circle cx="7" cy="7" r="2" strokeWidth="1.400" />
        </svg>
      </Logo>
      <Menu>
        {menuItems.map((m) => (
          <span key={m}>{m}</span>
        ))}
      </Menu>
      <WindowControls>
        <WindowButton $w={23}><MinGlyph /></WindowButton>
        <WindowButton $w={23}><MaxGlyph /></WindowButton>
        <WindowButton $w={25}>X</WindowButton>
      </WindowControls>
    </TitleBar>

    <ModeBar>
      <span>Open</span>
      <Caret $ml={15} />
      <ModeCenter>
        <ModeLink $ml={0}>Quick</ModeLink>
        <ModeLink $ml={25}>Guided</ModeLink>
        <ModeLink $ml={12} $active>
          Expert
        </ModeLink>
      </ModeCenter>
      <ModeRight>
        <ModeLink $ml={0}>Create</ModeLink>
        <Caret $ml={9} />
        <ModeLink $ml={20}>Share</ModeLink>
        <Caret $ml={11} />
      </ModeRight>
    </ModeBar>

    <Workspace>
      <ToolColumn>
        {toolSections.map((s) => (
          <ToolSection key={s.title}>
            <ToolLabel>{s.title}</ToolLabel>
            <ToolGrid>
              {s.tools.map((t, i) => (
                <ToolButton key={i} $active={s.active === i}>
                  {t}
                </ToolButton>
              ))}
            </ToolGrid>
          </ToolSection>
        ))}
        <ToolSection $last>
          <ToolLabel>COLOR</ToolLabel>
          <ColorWell>
            <Swatch $x={10} $y={10} $w={21} $c="#000" />
            <Swatch $x={0} $y={0} $w={21} $c="#1df01d" $b="#1c7a1c" />
            <Swatch $x={3} $y={26} $w={6} $c="#fff" $b="#000" />
            <Swatch $x={0} $y={23} $w={6} $c="#000" />
            <SwapArrows width="8" height="9" viewBox="0 0 8 9" fill="none" stroke="#111" strokeWidth="1">
              <path d="M1 1h4v5M3 4l2 2 2-2M1 1l2-1M1 1l2 2" />
            </SwapArrows>
          </ColorWell>
        </ToolSection>
      </ToolColumn>

      <EditorArea>
        <TabStrip>
          <DocTab>
            <span>Layer Sample.psd @ 24.3% (Layer 1 copy 2, RGB/8)</span>
            <span>×</span>
          </DocTab>
        </TabStrip>
        <HRuler>
          {rulerTop.map((n, i) => (
            <HRulerCell key={i}>{n}</HRulerCell>
          ))}
        </HRuler>
        <CanvasRow>
          <VRuler>
            {rulerSide.map((n, i) => (
              <VRulerCell key={i}>{n}</VRulerCell>
            ))}
          </VRuler>
          <Canvas>
            <Document>
              <Shape $x={16} $y={10} $w={167} $h={166} $c="#7dfb28" />
              <Shape $x={89} $y={54} $w={229} $h={228} $c="#ece32a" />
              <Shape $x={0} $y={249} $w={158} $h={157} $c="#c23646" />
            </Document>
          </Canvas>
          <VScroll>
            <span>▲</span>
            <span>▼</span>
          </VScroll>
        </CanvasRow>
        <StatusBar>
          <ZoomField>24.32%</ZoomField>
          <DocInfo>Doc: 17.9M/48.7M</DocInfo>
          <span>›</span>
          <HScrollTrack>◂</HScrollTrack>
        </StatusBar>
        <BinHeader>
          <BinSelect>
            <span>Show Open Files</span>
            <Caret $ml={0} />
          </BinSelect>
          <BinGrip />
          <ChevronDown size={12} strokeWidth={3} color="#222" />
        </BinHeader>
        <BinBody>
          <BinThumb>
            <MiniDoc>
              <Shape $x={2} $y={1} $w={21} $h={21} $c="#7dfb28" />
              <Shape $x={11} $y={7} $w={30} $h={30} $c="#ece32a" />
              <Shape $x={0} $y={31} $w={20} $h={20} $c="#c23646" />
            </MiniDoc>
          </BinThumb>
          <BinSpacer />
          <VScroll>
            <span>▲</span>
            <span>▼</span>
          </VScroll>
        </BinBody>
      </EditorArea>
    </Workspace>

    <LayersPanel>
      <PanelTabs>
        <PanelTab $w={34} $bg="#fff">Layers</PanelTab>
        <PanelTab $w={37} $bg="#e6e6e6">Effects</PanelTab>
        <PanelTab $w={33} $bg="#e6e6e6">Filters</PanelTab>
        <PanelTab $w={33} $bg="#9c9c9c">Styles</PanelTab>
      </PanelTabs>
      <PanelTools>
        {PanelIcons}
        <TrashSlot>
          <TrashIcon />
        </TrashSlot>
      </PanelTools>
      <BlendRow>
        <BlendSelect>
          <span>Normal</span>
          <Caret $ml={0} />
        </BlendSelect>
        <OpacityLabel>Opacity:</OpacityLabel>
        <OpacitySelect>
          <span>100%</span>
          <OpacityCaret>
            <Caret $ml={0} />
          </OpacityCaret>
        </OpacitySelect>
      </BlendRow>
      <ListRow>
        <LayerList>
          {layers.map((l) => (
            <LayerRow key={l.name}>
              <EyeSlot>
                <EyeIcon />
              </EyeSlot>
              <RowBody $selected={l.selected}>
                <LinkSlot>
                  <LinkIcon light={l.selected} />
                </LinkSlot>
                <LayerThumb $plain={l.plain} $selected={l.selected}>
                  {l.shapes.map((s, i) => (
                    <Shape key={i} $x={s.x} $y={s.y} $w={s.w} $h={s.h} $c={s.c} />
                  ))}
                </LayerThumb>
                <LayerName>{l.name}</LayerName>
              </RowBody>
            </LayerRow>
          ))}
        </LayerList>
        <LayerScroll>▲</LayerScroll>
      </ListRow>
      <PressBadge>
        Styles
        <Pointer width="10" height="13" viewBox="0 0 10 13">
          <path d="M1 1l0 9 2.500-2 2 4 2-1-2-4h3z" fill="#fff" stroke="#333" strokeWidth="0.800" />
        </Pointer>
      </PressBadge>
    </LayersPanel>

    <GraphicsStub>
      <GraphicsTab>Graphics</GraphicsTab>
      <GraphicsFilter>
        <FilterButton>By Type</FilterButton>
      </GraphicsFilter>
      <GraphicThumb $h={43} $mt={22} $bg="linear-gradient(#32d6d4, #2fc7e0)" />
      <GraphicThumb $h={6} $mt={6} $bg="#9accc5" />
    </GraphicsStub>

    <BottomBar>
      {bottomItems.map((b) => (
        <BottomItem key={b.label} $w={b.w} $sep={b.sep}>
          <BottomIcon $active={b.active}>{b.icon}</BottomIcon>
          <BottomLabel>{b.label}</BottomLabel>
        </BottomItem>
      ))}
    </BottomBar>

    <Taskbar>
      <StartSlot>
        <svg width="14" height="14" viewBox="0 0 14 14" fill="#f2f2f2">
          <path d="M0 2l6-1v5.500H0zM7 .8L14 0v6.500H7zM0 7.500h6V13l-6-1zM7 7.500h7V14l-7-.8z" />
        </svg>
      </StartSlot>
      <SearchBox>
        <MirroredSearch size={15} color="#222" strokeWidth={1.6} />
        <SearchText>Type here to search</SearchText>
        <DoodleSlot>
          <svg width="56" height="32" viewBox="0 0 56 32" fill="none">
            <path d="M7 3l2 5 5-2-1 5 4 2-5 2 1 5-4-3-4 3v-5l-4-2 4-2z" fill="#e0203a" />
            <circle cx="8" cy="12" r="3" fill="#f1b52c" />
            <path d="M16 14h14v13h-14zM30 14h14v13h-14z" fill="#f4f6f2" stroke="#cfd6cc" strokeWidth="0.700" />
            <path d="M14 26v4h33v-4" stroke="#5f9c70" strokeWidth="1.800" />
            <path d="M38 20l11-15 4 3-12 14-4 2z" fill="#3c74a8" />
            <circle cx="49" cy="25" r="4.500" stroke="#6a5ec8" strokeWidth="1.200" />
            <circle cx="49" cy="25" r="2" stroke="#6a5ec8" strokeWidth="1.100" />
          </svg>
        </DoodleSlot>
      </SearchBox>
      {TaskIcons.map((ic, i) => (
        <TaskItem key={i} $active={i === 10} $open={i === 13}>
          {ic}
        </TaskItem>
      ))}
      <Weather>
        <WeatherIcon />
        <span>59°F</span>
      </Weather>
      <TrayChevron>
        <ChevronUp size={15} strokeWidth={1.4} />
      </TrayChevron>
    </Taskbar>

    <SidePill>‹</SidePill>
  </Page>
)

export default App
